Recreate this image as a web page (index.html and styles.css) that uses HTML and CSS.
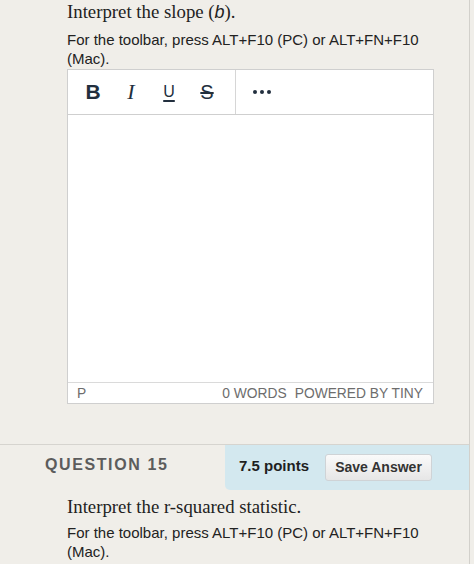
FILE: index.html
```html
<!DOCTYPE html>
<html>
<head>
<meta charset="utf-8">
<link rel="stylesheet" href="styles.css">
</head>
<body>
<div class="page">
  <section class="q">
    <h2 class="q-title">Interpret the slope (<i class="var">b</i>).</h2>
    <p class="hint">For the toolbar, press ALT+F10 (PC) or ALT+FN+F10 (Mac).</p>
    <div class="editor">
      <div class="toolbar">
        <div class="group fmt">
          <span class="tb tb-b">B</span>
          <span class="tb tb-i">I</span>
          <span class="tb tb-u">U</span>
          <span class="tb tb-s">S</span>
        </div>
        <div class="group more">
          <span class="dots"><i></i><i></i><i></i></span>
        </div>
      </div>
      <div class="area"></div>
      <div class="status">
        <span>P</span>
        <span class="right"><span>0 WORDS</span><span>POWERED BY TINY</span></span>
      </div>
    </div>
  </section>
  <div class="qhead">
    <div class="qnum">QUESTION 15</div>
    <div class="qmeta">
      <span class="pts">7.5 points</span>
      <button class="save">Save Answer</button>
    </div>
  </div>
  <section class="q q2">
    <h2 class="q-title">Interpret the r-squared statistic.</h2>
    <p class="hint">For the toolbar, press ALT+F10 (PC) or ALT+FN+F10 (Mac).</p>
  </section>
</div>
</body>
</html>
```
FILE: styles.css
```css
html, body {
  margin: 0;
  padding: 0;
  background: #f0eee9;
}
body {
  font-family: "Liberation Sans", Arial, sans-serif;
  color: #222;
  height: 564px;
  overflow: hidden;
}
.page {
  width: 470px;
  height: 564px;
  border-right: 1px solid #d2d0cb;
  box-sizing: border-box;
}
.q {
  padding-left: 67px;
  width: 367px;
}
.q-title {
  margin: 0;
  font-family: "Liberation Serif", "Times New Roman", serif;
  font-weight: normal;
  font-size: 18.8px;
  line-height: 24px;
  color: #222;
}
.var {
  font-family: "Liberation Sans", Arial, sans-serif;
  font-style: italic;
  font-size: 18px;
}
.hint {
  margin: 6px 0 1px;
  font-size: 15px;
  line-height: 19px;
  color: #222;
}
.editor {
  background: #fff;
  border: 1px solid #cfcfcf;
}
.toolbar {
  display: flex;
  height: 44px;
  border-bottom: 1px solid #cfcfcf;
}
.group {
  display: flex;
  align-items: center;
}
.fmt {
  padding-left: 6px;
  border-right: 1px solid #d6d6d6;
  width: 161px;
}
.tb {
  width: 38px;
  text-align: center;
  color: #222f3e;
  font-size: 20px;
  line-height: 24px;
}
.tb-b {
  font-weight: bold;
  font-family: "Liberation Sans", Arial, sans-serif;
  font-size: 21px;
}
.tb-i {
  font-family: "Liberation Serif", serif;
  font-style: italic;
  font-size: 22px;
}
.tb-u {
  font-size: 16px;
  text-decoration: underline;
  text-underline-offset: 3px;
  text-decoration-thickness: 2px;
}
.tb-s {
  font-size: 20px;
  text-decoration: line-through;
  text-decoration-thickness: 2px;
}
.more {
  padding-left: 14px;
}
.dots {
  display: flex;
  gap: 3px;
  width: 24px;
  justify-content: center;
}
.dots i {
  width: 4px;
  height: 4px;
  border-radius: 50%;
  background: #222f3e;
}
.area {
  height: 267px;
  border-bottom: 1px solid #dadada;
}
.status {
  display: flex;
  justify-content: space-between;
  align-items: center;
  height: 20px;
  padding: 0 10px 0 9px;
  font-size: 13.8px;
  color: #6d6d6d;
  text-transform: uppercase;
}
.right {
  display: flex;
  gap: 8px;
}
.qhead {
  margin-top: 40px;
  border-top: 1px solid #d6d4cf;
  display: flex;
  height: 45px;
}
.qnum {
  padding-left: 45px;
  width: 225px;
  box-sizing: border-box;
  padding-top: 11px;
  font-weight: bold;
  font-size: 16px;
  letter-spacing: 1.6px;
  color: #5c5c5c;
}
.qmeta {
  flex: 1;
  background: #d3e8ef;
  border-bottom-left-radius: 5px;
  display: flex;
  align-items: center;
  padding-left: 14px;
  gap: 16px;
}
.pts {
  font-weight: bold;
  font-size: 15px;
  color: #1f1f1f;
  margin-top: -4px;
}
.save {
  font-family: "Liberation Sans", Arial, sans-serif;
  font-weight: bold;
  font-size: 14px;
  color: #333;
  height: 27px;
  width: 107px;
  padding: 0;
  margin-top: -1px;
  border: 1px solid #cfd3d6;
  border-radius: 3px;
  background: linear-gradient(#fafafa, #e6e6e6);
}
.q2 {
  padding-top: 5px;
}
.q2 .hint {
  margin-top: 4px;
}
```
